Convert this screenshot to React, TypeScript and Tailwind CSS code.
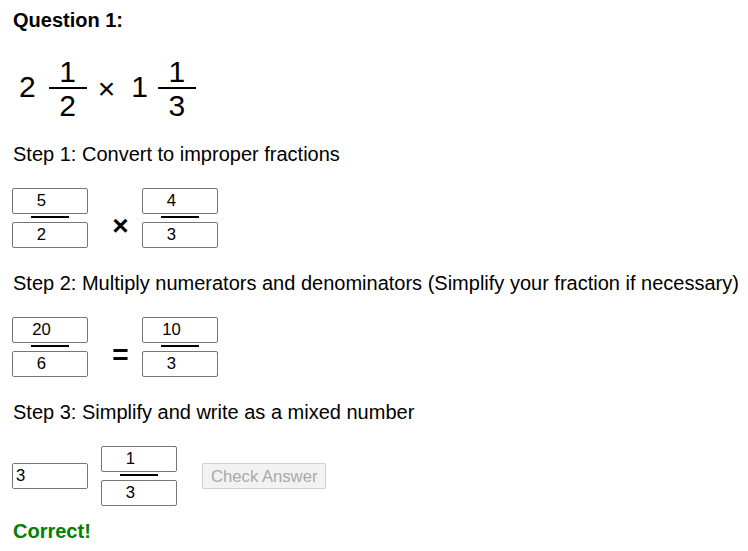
import React from "react";

type Frac = { top: string; bottom: string };

const inputCls =
  "h-[26px] w-[76px] rounded-[2px] border border-[#767676] bg-white text-[16.67px] text-black outline-none";

// fraction made of two inputs with a short bar between
function FractionInputs({ top, bottom }: Frac) {
  return (
    <div className="flex w-[76px] flex-col items-center">
      <input type="text" readOnly value={top} className={`${inputCls} pl-[2px] pr-[19px] text-center`} />
      <div className="mt-[2px] h-[2px] w-[38px] bg-black" />
      <input type="text" readOnly value={bottom} className={`${inputCls} mt-[4px] pl-[2px] pr-[19px] text-center`} />
    </div>
  );
}

function BigFraction({ top, bottom }: Frac) {
  return (
    <div className="flex w-[38px] flex-col items-center">
      <span className="h-[30px]">{top}</span>
      <div className="h-[2px] w-full bg-black" />
      <span className="mt-[2px] h-[30px]">{bottom}</span>
    </div>
  );
}

function Operator({ sign }: { sign: string }) {
  return (
    <span className="mt-[16px] ml-[24px] mr-[13px] w-[17px] text-center text-[28px] font-bold leading-[32px]">
      {sign}
    </span>
  );
}

export default function App() {
  return (
    <div className="min-h-screen bg-white px-[12px] pt-[9px] font-['Liberation_Sans',Arial,sans-serif] text-black">
      <div className="ml-[1px] text-[20px] font-bold leading-[23px]">Question 1:</div>

      {/* 2 1/2 × 1 1/3 */}
      <div className="mt-[25px] flex items-center text-[30px] leading-[30px]">
        <span className="ml-[7px] mb-[5px]">2</span>
        <div className="ml-[13px]">
          <BigFraction top="1" bottom="2" />
        </div>
        <span className="ml-[11px]">×</span>
        <span className="ml-[16px] mb-[5px]">1</span>
        <div className="ml-[10px]">
          <BigFraction top="1" bottom="3" />
        </div>
      </div>

      <div className="mt-[22px] ml-[1px] text-[20px] leading-[23px]">Step 1: Convert to improper fractions</div>
      <div className="mt-[22px] flex items-center">
        <FractionInputs top="5" bottom="2" />
        <Operator sign="×" />
        <FractionInputs top="4" bottom="3" />
      </div>

      <div className="mt-[24px] ml-[1px] whitespace-nowrap text-[20px] leading-[23px]">
        Step 2: Multiply numerators and denominators (Simplify your fraction if necessary)
      </div>
      <div className="mt-[22px] flex items-center">
        <FractionInputs top="20" bottom="6" />
        <Operator sign="=" />
        <FractionInputs top="10" bottom="3" />
      </div>

      <div className="mt-[24px] ml-[1px] text-[20px] leading-[23px]">Step 3: Simplify and write as a mixed number</div>
      <div className="mt-[22px] flex items-center">
        <input type="text" readOnly value="3" className={`${inputCls} px-[3px] text-left`} />
        <div className="ml-[13px]">
          <FractionInputs top="1" bottom="3" />
        </div>
        <button
          disabled
          className="ml-[25px] h-[26px] rounded-[2px] border border-[#d0d0d0] bg-[#f2f2f2] px-[8px] text-[16.67px] text-[#a9a9a9]"
        >
          Check Answer
        </button>
      </div>

      <div className="mt-[14px] ml-[1px] text-[20px] font-bold leading-[23px] text-[#008000]">Correct!</div>
    </div>
  );
}
